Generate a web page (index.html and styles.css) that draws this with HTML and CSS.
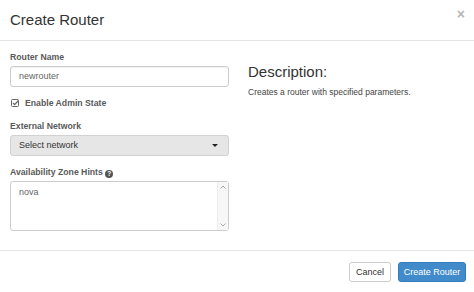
FILE: index.html
```html
<!DOCTYPE html>
<html lang="en">
<head>
  <meta charset="UTF-8">
  <title>Create Router</title>
  <link rel="stylesheet" href="styles.css">
</head>
<body>
  <div class="modal">
    <div class="modal-header">
      <div class="modal-title">Create Router</div>
      <span class="close">&times;</span>
    </div>
    <div class="modal-body">
      <div class="left">
        <div class="form-group">
          <label class="label">Router Name</label>
          <div class="input">newrouter</div>
        </div>
        <div class="check-row">
          <svg class="check-icon" width="8" height="8" viewBox="0 0 8 8">
            <rect x="0.5" y="0.5" width="7" height="7" rx="1" fill="none" stroke="#666" stroke-width="1"/>
            <path d="M2 4 L3.6 5.6 L7.5 1.5" fill="none" stroke="#666" stroke-width="1.3"/>
          </svg>
          <span class="label">Enable Admin State</span>
        </div>
        <div class="form-group">
          <label class="label">External Network</label>
          <div class="select">Select network<span class="caret"></span></div>
        </div>
        <div class="form-group last">
          <label class="label">Availability Zone Hints <span class="help">?</span></label>
          <div class="textarea">
            <div class="textarea-text">nova</div>
            <div class="scrollbar">
              <svg width="6" height="4" viewBox="0 0 6 4"><path d="M0.5 3.5 L3 1 L5.5 3.5" fill="none" stroke="#aaa" stroke-width="1"/></svg>
              <svg width="6" height="4" viewBox="0 0 6 4"><path d="M0.5 0.5 L3 3 L5.5 0.5" fill="none" stroke="#aaa" stroke-width="1"/></svg>
            </div>
          </div>
        </div>
      </div>
      <div class="right">
        <div class="desc-title">Description:</div>
        <p class="desc-text">Creates a router with specified parameters.</p>
      </div>
    </div>
    <div class="modal-footer">
      <button class="btn btn-default">Cancel</button>
      <button class="btn btn-primary">Create Router</button>
    </div>
  </div>
</body>
</html>
```

FILE: styles.css
```css
body {
  margin: 0;
  background: #fff;
  font-family: 'Liberation Sans', Arial, sans-serif;
  color: #333;
}
.modal {
  width: 474px;
  height: 292px;
  background: #fff;
}
.modal-header {
  height: 41px;
  box-sizing: border-box;
  border-bottom: 1px solid #e5e5e5;
  padding: 0 9px 0 10px;
  display: flex;
  align-items: center;
  justify-content: space-between;
}
.modal-title {
  font-size: 15px;
  color: #333;
  margin-top: -1px;
}
.close {
  font-size: 14px;
  font-weight: bold;
  color: #b8b8b8;
  margin-top: -12px;
}
.modal-body {
  display: flex;
  padding: 10px 10px 19px 10px;
  border-bottom: 1px solid #e5e5e5;
}
.left {
  width: 219px;
}
.right {
  margin-left: 19px;
  flex: 1;
}
.label {
  display: block;
  font-size: 8.7px;
  line-height: 12px;
  font-weight: bold;
  color: #5a5a5a;
}
.form-group {
  margin-bottom: 10px;
}
.form-group.last {
  margin-bottom: 0;
}
.form-group .label {
  margin-bottom: 3px;
}
.input, .select {
  height: 21px;
  box-sizing: border-box;
  border: 1px solid #ccc;
  border-radius: 3px;
  font-size: 9px;
  line-height: 19px;
  padding: 0 8px;
  color: #666;
}
.input {
  box-shadow: inset 0 1px 1px rgba(0,0,0,0.06);
}
.select {
  background: #e6e6e6;
  border-color: #d2d2d2;
  color: #333;
  display: flex;
  justify-content: space-between;
  align-items: center;
}
.caret {
  width: 0;
  height: 0;
  border-left: 3px solid transparent;
  border-right: 3px solid transparent;
  border-top: 3px solid #222;
  margin-right: 2px;
}
.check-row {
  display: flex;
  align-items: center;
  height: 12px;
  margin-bottom: 11px;
}
.check-icon {
  margin-left: 1px;
  margin-right: 6px;
}
.help {
  display: inline-block;
  width: 8px;
  height: 8px;
  border-radius: 50%;
  background: #555;
  color: #fff;
  font-size: 6.5px;
  line-height: 8px;
  text-align: center;
  vertical-align: -1px;
}
.textarea {
  height: 50px;
  box-sizing: border-box;
  border: 1px solid #ccc;
  border-radius: 3px;
  display: flex;
  justify-content: space-between;
}
.textarea-text {
  font-size: 9px;
  color: #666;
  padding: 5px 0 0 8px;
}
.scrollbar {
  width: 10px;
  background: #f7f7f7;
  border-left: 1px solid #eee;
  display: flex;
  flex-direction: column;
  justify-content: space-between;
  align-items: center;
  padding: 3px 0 3px 0;
}
.desc-title {
  font-size: 15px;
  color: #333;
  margin-top: 12px;
}
.desc-text {
  font-size: 8.5px;
  color: #444;
  margin: 7px 0 0 0;
}
.modal-footer {
  display: flex;
  justify-content: flex-end;
  gap: 7px;
  padding: 11px 8px 0 0;
}
.btn {
  height: 20px;
  box-sizing: border-box;
  border-radius: 3px;
  font-family: 'Liberation Sans', Arial, sans-serif;
  font-size: 9px;
  padding: 0;
  cursor: pointer;
}
.btn-default {
  width: 42px;
  background: #fff;
  border: 1px solid #ccc;
  color: #333;
}
.btn-primary {
  width: 68px;
  background: #428bca;
  border: 1px solid #357ebd;
  color: #fff;
}
```
